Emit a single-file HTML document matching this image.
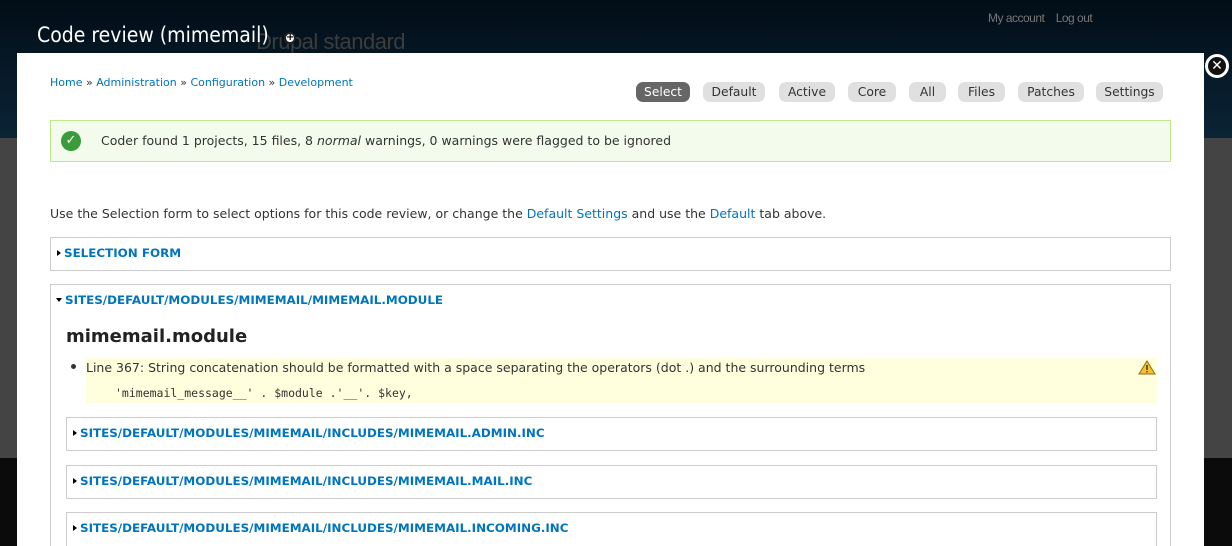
<!DOCTYPE html>
<html style="overflow:hidden;height:546px"><head><meta charset="utf-8"><style>
*{margin:0;padding:0;box-sizing:border-box}
body{width:1232px;height:546px;overflow:hidden;position:relative;background:#444;font-family:"DejaVu Sans",sans-serif;font-size:12.5px;color:#333}
.a{position:absolute}
.hdr{left:0;top:0;width:1232px;height:138px;background:linear-gradient(#020d17,#0a2436)}
.bot{left:0;top:458px;width:1232px;height:88px;background:#0b0b0b}
.modal{left:17px;top:53px;width:1187px;height:493px;background:#fff}
a,.lk{color:#0074bd;text-decoration:none}
.tab{position:absolute;top:82px;height:20px;border-radius:7px;background:#e0e0e0;color:#333;font-size:12.3px;line-height:20px;text-align:center}
.box{position:absolute;border:1px solid #ccc}
.leg{position:absolute;font-weight:bold;color:#0074bd;font-size:11.9px;white-space:nowrap}
.tri{display:inline-block;width:0;height:0;border-top:3px solid transparent;border-bottom:3px solid transparent;border-left:4px solid #000;margin-right:3px;vertical-align:1px}
.trd{display:inline-block;width:0;height:0;border-left:3px solid transparent;border-right:3px solid transparent;border-top:4px solid #000;margin-right:3px;vertical-align:2px}
</style></head><body>
<div class="a hdr"></div>
<div class="a bot"></div>
<div class="a" style="left:256px;top:29px;font-family:'Liberation Sans',sans-serif;font-size:22px;color:#3c3c3c;letter-spacing:-0.5px">Drupal standard</div>
<div class="a" style="left:37px;top:23px;font-size:21px;color:#fff;font-family:'DejaVu Sans Condensed','DejaVu Sans',sans-serif">Code review (mimemail)</div>
<div class="a" style="left:284px;top:32px;width:12px;height:12px;border-radius:50%;background:#fff;border:2px solid #222;color:#000;font-size:10px;line-height:8px;text-align:center;font-weight:bold">+</div>
<div class="a" style="left:988px;top:11px;font-family:'Liberation Sans',sans-serif;font-size:12px;color:#777;letter-spacing:-0.5px">My account&nbsp;&nbsp;&nbsp;&nbsp;Log out</div>
<div class="a modal"></div>
<div class="a" style="left:1205px;top:54px;width:24px;height:24px;border-radius:50%;background:#fff;"></div>
<div class="a" style="left:1208px;top:57px;width:18px;height:18px;border-radius:50%;background:#111;color:#fff;font-size:14px;line-height:18px;text-align:center;font-weight:bold">✕</div>
<div class="a" style="left:50px;top:76px;font-size:11px"><a>Home</a> » <a>Administration</a> » <a>Configuration</a> » <a>Development</a></div>
<div class="tab" style="left:636px;width:54px;background:#666;color:#fff">Select</div>
<div class="tab" style="left:703px;width:62px">Default</div>
<div class="tab" style="left:779px;width:56px">Active</div>
<div class="tab" style="left:848px;width:48px">Core</div>
<div class="tab" style="left:909px;width:37px">All</div>
<div class="tab" style="left:958px;width:47px">Files</div>
<div class="tab" style="left:1018px;width:66px">Patches</div>
<div class="tab" style="left:1096px;width:67px">Settings</div>
<div class="a" style="left:50px;top:120px;width:1121px;height:42px;background:#f3fbec;border:1px solid #bde88c"></div>
<div class="a" style="left:61px;top:131px;width:20px;height:20px;border-radius:50%;background:#3a9c3a;color:#fff;font-size:13px;line-height:20px;text-align:center;font-weight:bold">✓</div>
<div class="a" style="left:101px;top:133px;color:#333">Coder found 1 projects, 15 files, 8 <i>normal</i> warnings, 0 warnings were flagged to be ignored</div>
<div class="a" style="left:50px;top:206px">Use the Selection form to select options for this code review, or change the <a>Default Settings</a> and use the <a>Default</a> tab above.</div>
<div class="box" style="left:50px;top:237px;width:1121px;height:34px"></div>
<div class="leg" style="left:57px;top:246px"><span class="tri"></span>SELECTION FORM</div>
<div class="box" style="left:50px;top:284px;width:1121px;height:262px;border-bottom:none"></div>
<div class="leg" style="left:56px;top:293px"><span class="trd"></span>SITES/DEFAULT/MODULES/MIMEMAIL/MIMEMAIL.MODULE</div>
<div class="a" style="left:66px;top:326px;font-size:18px;font-weight:bold;color:#222">mimemail.module</div>
<div class="a" style="left:86px;top:358px;width:1071px;height:45px;background:#ffffdd"></div>
<div class="a" style="left:71px;top:364px;width:5px;height:5px;border-radius:50%;background:#333"></div>
<div class="a" style="left:86px;top:360px">Line 367: String concatenation should be formatted with a space separating the operators (dot .) and the surrounding terms</div>
<div class="a" style="left:115px;top:386px;font-family:'DejaVu Sans Mono',monospace;font-size:11.5px">'mimemail_message__' . $module .'__'. $key,</div>
<svg class="a" style="left:1138px;top:360px" width="18" height="15"><path d="M9 1L17 14H1Z" fill="#f5c12e" stroke="#8a6d1a"/><rect x="8.3" y="5" width="1.4" height="5" fill="#333"/><rect x="8.3" y="11" width="1.4" height="1.4" fill="#333"/></svg>
<div class="box" style="left:66px;top:417px;width:1091px;height:34px"></div>
<div class="leg" style="left:73px;top:426px"><span class="tri"></span>SITES/DEFAULT/MODULES/MIMEMAIL/INCLUDES/MIMEMAIL.ADMIN.INC</div>
<div class="box" style="left:66px;top:465px;width:1091px;height:34px"></div>
<div class="leg" style="left:73px;top:474px"><span class="tri"></span>SITES/DEFAULT/MODULES/MIMEMAIL/INCLUDES/MIMEMAIL.MAIL.INC</div>
<div class="box" style="left:66px;top:512px;width:1091px;height:34px;border-bottom:none"></div>
<div class="leg" style="left:73px;top:521px"><span class="tri"></span>SITES/DEFAULT/MODULES/MIMEMAIL/INCLUDES/MIMEMAIL.INCOMING.INC</div>
</body></html>
